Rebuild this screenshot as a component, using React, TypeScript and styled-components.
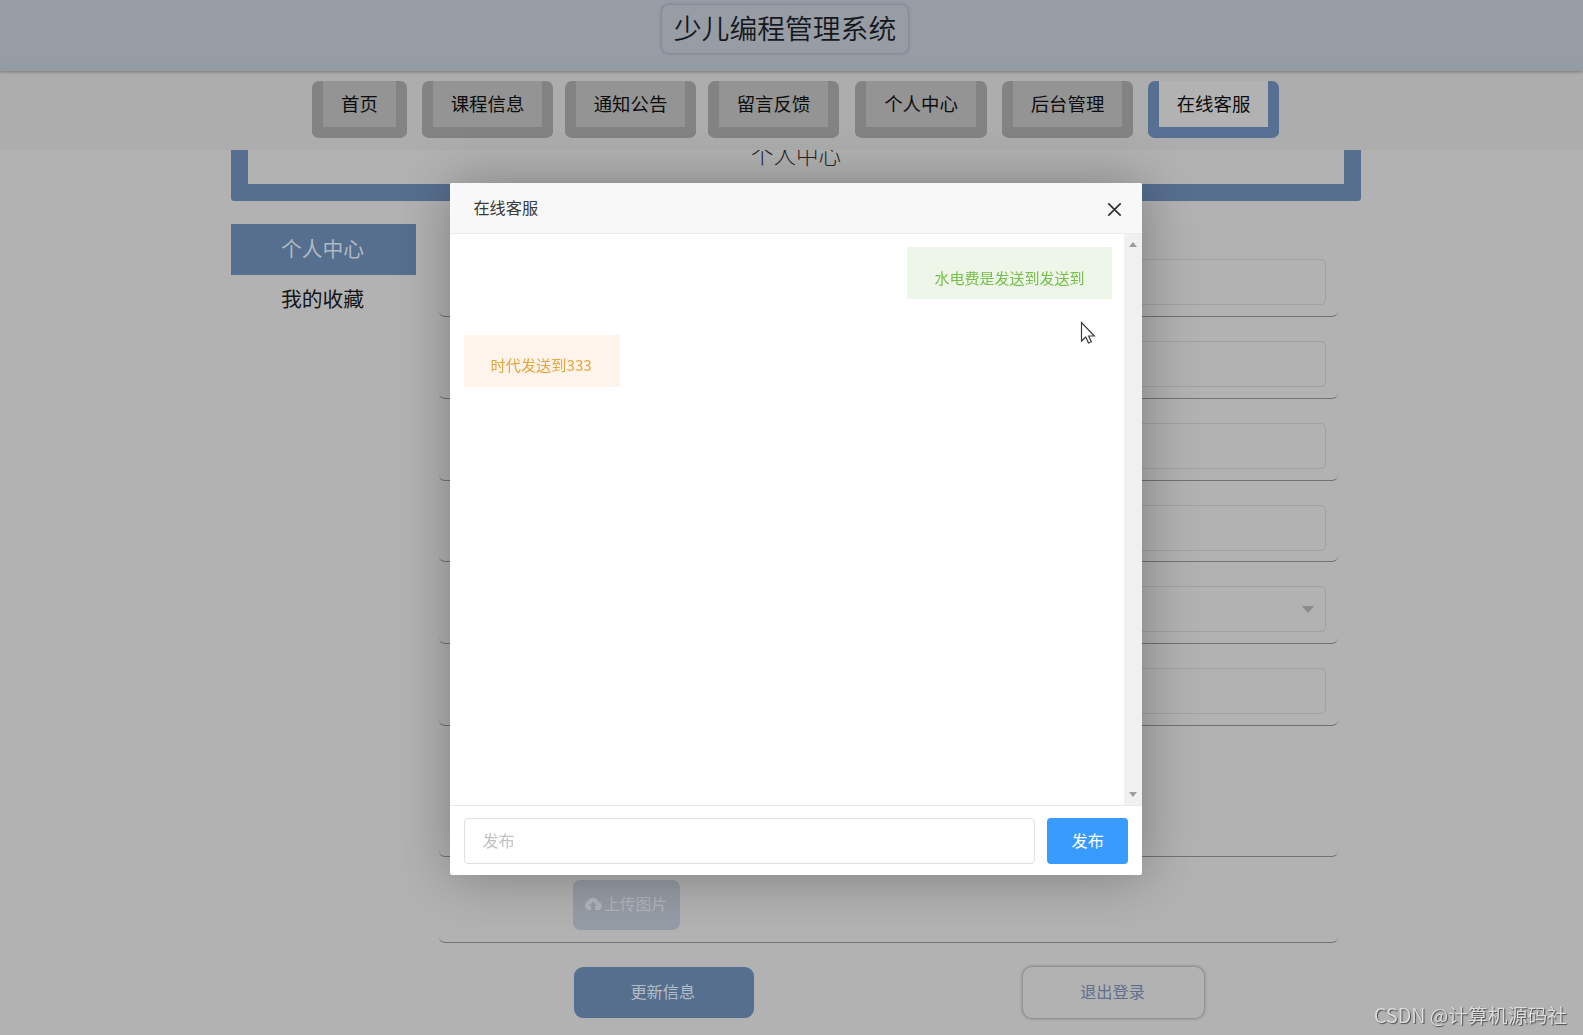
import React from "react";
import styled, { createGlobalStyle, css } from "styled-components";

const Global = createGlobalStyle`
  * { box-sizing: border-box; }
  body {
    margin: 0;
    background: #b2b2b2;
    font-family: "Noto Sans CJK SC", "Noto Sans", sans-serif;
    overflow: hidden;
  }
`;

const Page = styled.div`
  width: 1583px;
  height: 1035px;
  overflow: hidden;
  display: flex;
  flex-direction: column;
  background: #b2b2b2;
`;

const Header = styled.header`
  height: 71px;
  flex: none;
  display: flex;
  justify-content: center;
  align-items: flex-start;
  padding: 5px 0 0 0;
  background: linear-gradient(#979ca5 0 58px, #949ca3 66px);
  box-shadow: 0 1px 3px rgba(0, 0, 0, 0.3);
  z-index: 1;
`;

const Brand = styled.h1`
  margin: 0 0 0 -13px;
  width: 246px;
  height: 48px;
  display: flex;
  justify-content: center;
  align-items: center;
  padding-bottom: 3px;
  border-radius: 7px;
  box-shadow: 0 0 3px 1px rgba(70, 76, 92, 0.3);
  font-size: 27.8px;
  font-weight: 350;
  line-height: 1;
  color: #14171c;
`;

const Nav = styled.nav`
  height: 79px;
  flex: none;
  display: flex;
  padding: 10px 0 0 312px;
  background: #adadad;
`;

const NavItem = styled.a<{ $w: number; $gap: number; $active?: boolean }>`
  width: ${(p) => p.$w}px;
  height: 57px;
  margin-right: ${(p) => p.$gap}px;
  padding-bottom: 2px;
  display: flex;
  justify-content: center;
  align-items: center;
  border-radius: 7px;
  border: 11.5px solid ${(p) => (p.$active ? "#566f93" : "#838383")};
  border-top: 0;
  background: ${(p) => (p.$active ? "#b2b2b3" : "#949494")};
  color: #0c0c0c;
  font-size: 18.4px;
  line-height: 1;
  white-space: nowrap;
`;

const Banner = styled.div`
  width: 1130px;
  height: 51px;
  flex: none;
  margin-left: 231px;
  overflow: hidden;
  border: 17px solid #566f8e;
  border-top: 0;
  border-radius: 0 0 4px 4px;
  text-align: center;
  font-size: 22.5px;
  line-height: 34px;
  font-weight: 300;
  color: #262626;
`;

const BannerText = styled.span`
  display: block;
  margin-top: -13px;
`;

const Content = styled.div`
  display: flex;
  flex: 1;
  padding: 23px 0 0 231px;
`;

const Side = styled.aside`
  width: 185px;
  margin-right: 23px;
`;

const SideItem = styled.div<{ $active?: boolean }>`
  height: 50.5px;
  padding: 0 2px 2px 0;
  display: flex;
  align-items: center;
  justify-content: center;
  font-size: 20.8px;
  line-height: 1;
  color: #151515;
  ${(p) =>
    p.$active &&
    css`
      background: #566f8e;
      color: #afb8c3;
    `}
`;

const Form = styled.div`
  width: 899px;
  padding-top: 11px;
`;

const Row = styled.div<{ $h: number }>`
  height: ${(p) => p.$h}px;
  padding: 24px 12px 0 134px;
  border-bottom: 1.5px solid #6f7178;
  border-radius: 6px;
`;

const Field = styled.div`
  height: 46px;
  border: 1px solid #a0a0a1;
  border-radius: 5px;
  display: flex;
  align-items: center;
  justify-content: flex-end;
  padding-right: 11px;
`;

const Caret = styled.i`
  border: 6px solid transparent;
  border-top: 7px solid #8a8a8a;
  border-bottom: 0;
`;

const Upload = styled.button`
  width: 107px;
  height: 50px;
  margin-top: -0.5px;
  display: flex;
  align-items: center;
  justify-content: center;
  gap: 2px;
  padding: 0 2px 2px 0;
  border: 0;
  border-radius: 7px;
  background: #969ca5;
  color: #b3b5ba;
  font: 15.8px/1 "Noto Sans CJK SC", sans-serif;
`;

const Actions = styled.div`
  display: flex;
  justify-content: space-between;
  padding: 23.5px 134px 0 135px;
`;

const ActionButton = styled.button<{ $primary?: boolean }>`
  width: ${(p) => (p.$primary ? 179.5 : 181)}px;
  height: 51px;
  padding: 0 2px 2px 0;
  border: 0;
  border-radius: 9px;
  font: 16.2px/1 "Noto Sans CJK SC", sans-serif;
  background: ${(p) => (p.$primary ? "#566f8e" : "#b2b2b2")};
  color: ${(p) => (p.$primary ? "#b4bcc6" : "#61708d")};
  box-shadow: ${(p) => (p.$primary ? "none" : "0 0 3px 1px #80828a")};
`;

const Overlay = styled.div`
  position: fixed;
  inset: 0;
  display: flex;
  align-items: flex-start;
  padding: 183.3px 0 0 450.4px;
  z-index: 10;
`;

const Dialog = styled.section`
  width: 691.5px;
  height: 691.5px;
  display: flex;
  flex-direction: column;
  border-radius: 2px;
  background: #fff;
  box-shadow: 1px 1px 54px rgba(0, 0, 0, 0.3);
`;

const DialogHead = styled.div`
  height: 50.5px;
  flex: none;
  display: flex;
  align-items: center;
  justify-content: space-between;
  padding: 0 20px 0 23px;
  border-bottom: 1.5px solid #ececec;
  border-radius: 2px 2px 0 0;
  background: #f8f8f8;
  font-size: 16.2px;
  line-height: 1;
  color: #3a3a3a;
`;

const DialogTitle = styled.span`
  padding-bottom: 2px;
`;

const CloseIcon = styled.svg`
  margin-top: 2px;
`;

const Chat = styled.div`
  flex: 1;
  display: flex;
  min-height: 0;
`;

const Messages = styled.div`
  flex: 1;
  display: flex;
  flex-direction: column;
  padding: 13px 12.5px 0 13.5px;
  gap: 35.5px;
`;

const Bubble = styled.div<{ $own?: boolean }>`
  align-self: ${(p) => (p.$own ? "flex-end" : "flex-start")};
  width: ${(p) => (p.$own ? 205 : 156.5)}px;
  height: 52.5px;
  padding: 8px ${(p) => (p.$own ? 0 : 2)}px 0 0;
  display: flex;
  align-items: center;
  justify-content: center;
  font-size: ${(p) => (p.$own ? 15 : 15.2)}px;
  line-height: 1;
  white-space: nowrap;
  background: ${(p) => (p.$own ? "#eef6e9" : "#fef4eb")};
  color: ${(p) => (p.$own ? "#74bf49" : "#e5a63e")};
`;

const ScrollTrack = styled.div`
  width: 17.5px;
  display: flex;
  flex-direction: column;
  align-items: center;
  justify-content: space-between;
  padding: 8px 0;
  background: #f0f0f0;
`;

const Arrow = styled.i<{ $down?: boolean }>`
  border: 4.5px solid transparent;
  ${(p) =>
    p.$down
      ? "border-top: 5px solid #9c9c9c; border-bottom: 0;"
      : "border-bottom: 5px solid #9c9c9c; border-top: 0;"}
`;

const Composer = styled.div`
  height: 70px;
  flex: none;
  display: flex;
  gap: 12px;
  padding: 12px 14px 0 13.5px;
  border-top: 1px solid #e9e9e9;
`;

const ComposerInput = styled.input`
  flex: 1;
  min-width: 0;
  height: 46px;
  padding: 0 17.5px 2px;
  border: 1px solid #e0e0e0;
  border-radius: 4px;
  outline: 0;
  font: 16.2px "Noto Sans CJK SC", sans-serif;
  &::placeholder {
    color: #c2c2c2;
  }
`;

const Send = styled.button`
  width: 80.5px;
  height: 46px;
  padding: 0 0 2px;
  border: 0;
  border-radius: 4px;
  background: #3a9bff;
  color: #fff;
  font: 16.2px/1 "Noto Sans CJK SC", sans-serif;
`;

const Pointer = styled.svg`
  position: fixed;
  left: 1080px;
  top: 321px;
  z-index: 20;
`;

const Watermark = styled.div`
  position: fixed;
  right: 16px;
  bottom: 8px;
  z-index: 20;
  font-size: 19.8px;
  font-weight: 350;
  line-height: 24px;
  color: #dedede;
  text-shadow: 1px 1px 1px #4c4c4c;
  white-space: nowrap;
`;

const navItems = [
  { label: "首页", w: 95, gap: 15 },
  { label: "课程信息", w: 131, gap: 12 },
  { label: "通知公告", w: 131, gap: 12 },
  { label: "留言反馈", w: 131, gap: 16 },
  { label: "个人中心", w: 132, gap: 15 },
  { label: "后台管理", w: 131, gap: 15 },
  { label: "在线客服", w: 131, gap: 0, active: true },
];

const fields = ["text", "text", "text", "text", "select", "text"];

export default function App() {
  return (
    <Page>
      <Global />
      <Header>
        <Brand>少儿编程管理系统</Brand>
      </Header>
      <Nav>
        {navItems.map((n) => (
          <NavItem key={n.label} $w={n.w} $gap={n.gap} $active={n.active}>
            {n.label}
          </NavItem>
        ))}
      </Nav>
      <Banner>
        <BannerText>个人中心</BannerText>
      </Banner>
      <Content>
        <Side>
          <SideItem $active>个人中心</SideItem>
          <SideItem>我的收藏</SideItem>
        </Side>
        <Form>
          {fields.map((kind, i) => (
            <Row key={i} $h={81.85}>
              <Field>{kind === "select" && <Caret />}</Field>
            </Row>
          ))}
          <Row $h={130.8} />
          <Row $h={86.2}>
            <Upload>
              <svg width="18" height="14" viewBox="0 0 18 14">
                <path
                  fill="currentColor"
                  d="M14.4 5.1A5.6 5.6 0 0 0 3.7 4.5 4.6 4.6 0 0 0 4.4 13H7V9H4.8L9 4.4 13.2 9H11v4h3.2a4 4 0 0 0 .2-7.9z"
                />
              </svg>
              上传图片
            </Upload>
          </Row>
          <Actions>
            <ActionButton $primary>更新信息</ActionButton>
            <ActionButton>退出登录</ActionButton>
          </Actions>
        </Form>
      </Content>

      <Overlay>
        <Dialog>
          <DialogHead>
            <DialogTitle>在线客服</DialogTitle>
            <CloseIcon width="15" height="15" viewBox="0 0 15 15">
              <path d="M1.3 1.3 13.7 13.7M13.7 1.3 1.3 13.7" stroke="#333" strokeWidth="1.7" fill="none" />
            </CloseIcon>
          </DialogHead>
          <Chat>
            <Messages>
              <Bubble $own>水电费是发送到发送到</Bubble>
              <Bubble>时代发送到333</Bubble>
            </Messages>
            <ScrollTrack>
              <Arrow />
              <Arrow $down />
            </ScrollTrack>
          </Chat>
          <Composer>
            <ComposerInput placeholder="发布" />
            <Send>发布</Send>
          </Composer>
        </Dialog>
      </Overlay>

      <Pointer width="16" height="25" viewBox="0 0 16 25">
        <path
          d="M1.5 1.5V20l4.3-4 2.7 6 2.8-1.2-2.6-5.8h5.6z"
          fill="#fff"
          stroke="#3c3c42"
          strokeWidth="1.2"
        />
      </Pointer>
      <Watermark>CSDN @计算机源码社</Watermark>
    </Page>
  );
}
